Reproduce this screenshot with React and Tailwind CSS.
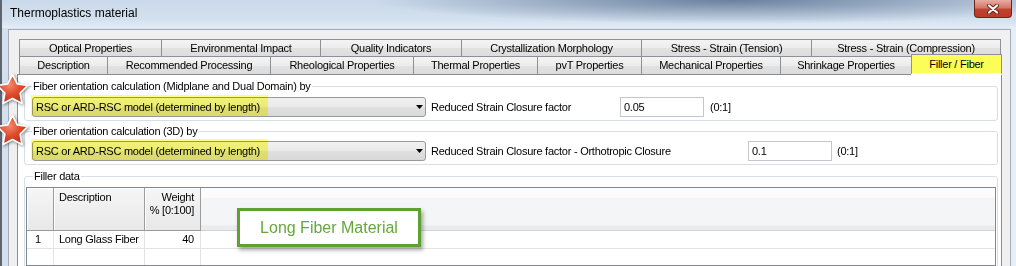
import React from "react";

function Star({ className }) {
  return (
    <svg className={className} width="37" height="37" viewBox="0 0 32 32">
      <defs>
        <radialGradient id="starg" cx="40%" cy="35%" r="70%">
          <stop offset="0%" stopColor="#f58a6c" />
          <stop offset="50%" stopColor="#de4c2c" />
          <stop offset="100%" stopColor="#b52f18" />
        </radialGradient>
      </defs>
      <path
        d="M16 2 L20.11 10.34 L29.31 11.67 L22.66 18.16 L24.23 27.33 L16 23 L7.77 27.33 L9.34 18.16 L2.69 11.67 L11.89 10.34 Z"
        fill="url(#starg)"
        stroke="#ffffff"
        strokeWidth="1.5"
        strokeLinejoin="round"
      />
    </svg>
  );
}

function Combo() {
  return (
    <div className="relative w-[394px] h-[20px] shrink-0 border border-[#9a9a9a] rounded-[3px] bg-[linear-gradient(180deg,#f1f1f1_0%,#eaeaea_50%,#e0e0e0_51%,#d9d9d9_100%)] flex items-center pl-[3px]">
      <div className="absolute left-[-2px] top-[-3px] w-[237px] h-[21px] bg-[#ffff2a] opacity-60 mix-blend-multiply" />
      <span className="relative">RSC or ARD-RSC model (determined by length)</span>
      <svg className="absolute right-[2px] top-[7px]" width="7" height="4" viewBox="0 0 7 4">
        <path d="M0 0H7L3.5 4Z" fill="#000" />
      </svg>
    </div>
  );
}

const topTabs = [
  ["Optical Properties", "w-[142px]"],
  ["Environmental Impact", "w-[159px]"],
  ["Quality Indicators", "w-[141px]"],
  ["Crystallization Morphology", "w-[180px]"],
  ["Stress - Strain (Tension)", "w-[170px]"],
  ["Stress - Strain (Compression)", "w-[190px] border-r"],
];

const bottomTabs = [
  ["Description", "w-[88px]"],
  ["Recommended Processing", "w-[163px]"],
  ["Rheological Properties", "w-[143px]"],
  ["Thermal Properties", "w-[124px]"],
  ["pvT Properties", "w-[104px]"],
  ["Mechanical Properties", "w-[139px]"],
  ["Shrinkage Properties", "w-[131px]"],
];

const tabBg =
  "bg-[linear-gradient(180deg,#f4f4f4_0%,#ececec_50%,#e2e2e2_51%,#dcdcdc_100%)]";

export default function App() {
  return (
    <div className="relative w-[1016px] h-[266px] overflow-hidden bg-[#dbe5f1] font-['Liberation_Sans',Arial,sans-serif] text-[11px] leading-[13px] tracking-[-0.25px] text-black">
      {/* Title bar */}
      <div className="relative h-[28px] flex items-start border-l-2 border-[#5d6570] bg-[radial-gradient(ellipse_360px_24px_at_72%_0%,rgba(95,118,150,0.9),rgba(95,118,150,0)),linear-gradient(180deg,#cad9ea_0%,#d3e0ee_70%,#e4edf7_100%)]">
        <span className="ml-[8px] mt-[6px] text-[12px] leading-[14px] tracking-normal">
          Thermoplastics material
        </span>
        <div className="ml-auto mr-[4px] w-[38px] h-[18px] flex items-center justify-center border border-t-0 border-[#6e2419] rounded-b-[4px] bg-[linear-gradient(180deg,#e6ada3_0%,#d57869_45%,#c2412f_55%,#b83a29_100%)]">
          <svg width="12" height="10" viewBox="0 0 12 10">
            <path d="M2 1.5 L10 8.5 M10 1.5 L2 8.5" stroke="#6b2018" strokeWidth="4" strokeLinecap="round" />
            <path d="M2 1.5 L10 8.5 M10 1.5 L2 8.5" stroke="#ffffff" strokeWidth="2.2" strokeLinecap="round" />
          </svg>
        </div>
      </div>

      {/* Body */}
      <div className="flex h-[238px]">
        <div className="w-[8px] shrink-0 border-l-2 border-[#5d6570] bg-[#d4e0ee]" />
        <div className="flex-1 mt-[1px] border-l border-t border-r border-[#a3acb8] bg-[#f0f0f0] pt-[9px] pl-[8px]">
          <div className="w-[985px]">
            {/* top tab row */}
            <div className="ml-[2px] flex h-[17px]">
              {topTabs.map(([t, w]) => (
                <div
                  key={t}
                  className={`${w} h-full shrink-0 flex items-center justify-center border-l border-t border-[#8d9096] ${tabBg}`}
                >
                  {t}
                </div>
              ))}
            </div>
            {/* bottom tab row */}
            <div className="ml-[2px] flex h-[18px] items-end">
              {bottomTabs.map(([t, w]) => (
                <div
                  key={t}
                  className={`${w} h-[18px] shrink-0 flex items-center justify-center border-l border-t border-[#8d9096] ${tabBg}`}
                >
                  {t}
                </div>
              ))}
              <div className="relative z-10 w-[91px] h-[21px] -mb-px shrink-0 flex items-center justify-center border-l border-t border-r border-[#8d9096] border-b-2 border-b-white bg-[#fdfd58]">
                Filler / Fiber
              </div>
            </div>
            {/* panel */}
            <div className="h-[200px] border border-[#898c95] bg-white">
              <fieldset className="ml-[6px] mt-[5px] w-[974px] border border-[#d5dfe5] rounded-[3px] px-[7px] pb-[3px]">
                <legend className="px-[1px] leading-[13px]">
                  Fiber orientation calculation (Midplane and Dual Domain) by
                </legend>
                <div className="mt-[4px] flex items-center h-[20px]">
                  <Combo />
                  <span className="ml-[5px] w-[189px] shrink-0">Reduced Strain Closure factor</span>
                  <div className="w-[84px] h-[20px] shrink-0 border border-[#c3c7cd] bg-white flex items-center pl-[3px]">
                    0.05
                  </div>
                  <span className="ml-[6px]">(0:1]</span>
                </div>
              </fieldset>

              <fieldset className="ml-[6px] mt-[4px] w-[974px] border border-[#d5dfe5] rounded-[3px] px-[7px] pb-[3px]">
                <legend className="px-[1px] leading-[13px]">Fiber orientation calculation (3D) by</legend>
                <div className="mt-[3px] flex items-center h-[20px]">
                  <Combo />
                  <span className="ml-[5px] w-[317px] shrink-0">
                    Reduced Strain Closure factor - Orthotropic Closure
                  </span>
                  <div className="w-[84px] h-[20px] shrink-0 border border-[#c3c7cd] bg-white flex items-center pl-[3px]">
                    0.1
                  </div>
                  <span className="ml-[5px]">(0:1]</span>
                </div>
              </fieldset>

              <fieldset className="ml-[6px] mt-[5px] w-[974px] border border-[#d5dfe5] rounded-[3px] px-[1px] pb-[4px]">
                <legend className="ml-[7px] px-[1px] leading-[13px]">Filler data</legend>
                <div className="mt-[4px] w-[970px] border border-[#828790] bg-white">
                  <div className="flex h-[43px]">
                    <div className="w-[27px] shrink-0 border-r border-b border-[#9c9c9c] bg-[linear-gradient(180deg,#f6f6f6_0%,#e8e8e8_100%)] shadow-[inset_1px_1px_0_#ffffff]" />
                    <div className="w-[91px] shrink-0 pl-[5px] pt-[3px] border-r border-b border-[#9c9c9c] bg-[linear-gradient(180deg,#f6f6f6_0%,#e8e8e8_100%)] shadow-[inset_1px_1px_0_#ffffff]">
                      Description
                    </div>
                    <div className="w-[56px] shrink-0 pr-[6px] pt-[3px] text-right border-r border-b border-[#9c9c9c] bg-[linear-gradient(180deg,#f6f6f6_0%,#e8e8e8_100%)] shadow-[inset_1px_1px_0_#ffffff]">
                      <div>Weight</div>
                      <div>% [0:100]</div>
                    </div>
                    <div className="flex-1 border-b border-[#cfd3d8] bg-[linear-gradient(180deg,#fcfcfc_0%,#fcfcfc_22%,#f4f5f6_24%,#f4f5f6_88%,#e9ebed_90%,#e9ebed_100%)]" />
                  </div>
                  <div className="flex h-[18px]">
                    <div className="w-[27px] shrink-0 pl-[8px] flex items-center border-r border-b border-[#e3e3e3]">1</div>
                    <div className="w-[91px] shrink-0 pl-[5px] flex items-center border-r border-b border-[#e3e3e3]">
                      Long Glass Fiber
                    </div>
                    <div className="w-[56px] shrink-0 pr-[6px] flex items-center justify-end border-r border-b border-[#e3e3e3]">
                      40
                    </div>
                    <div className="flex-1 border-b border-[#e3e3e3]" />
                  </div>
                  <div className="flex h-[16px]">
                    <div className="w-[27px] shrink-0 border-r border-[#e3e3e3]" />
                    <div className="w-[91px] shrink-0 border-r border-[#e3e3e3]" />
                    <div className="w-[56px] shrink-0 border-r border-[#e3e3e3]" />
                    <div className="flex-1" />
                  </div>
                </div>
              </fieldset>
            </div>
          </div>
        </div>
        <div className="w-[5px] shrink-0 bg-[#e8eef6]" />
      </div>

      {/* Overlays */}
      <Star className="absolute left-[-6px] top-[72px] drop-shadow-[1px_1px_1.5px_rgba(0,0,0,0.45)]" />
      <Star className="absolute left-[-6px] top-[113px] drop-shadow-[1px_1px_1.5px_rgba(0,0,0,0.45)]" />

      <div className="absolute left-[237px] top-[208px] w-[184px] h-[39px] border-[3px] border-[#5ea132] bg-white shadow-[2px_3px_4px_rgba(0,0,0,0.35)] flex items-center justify-center text-[16px] leading-[18px] tracking-normal text-[#64a83c]">
        Long Fiber Material
      </div>
    </div>
  );
}
